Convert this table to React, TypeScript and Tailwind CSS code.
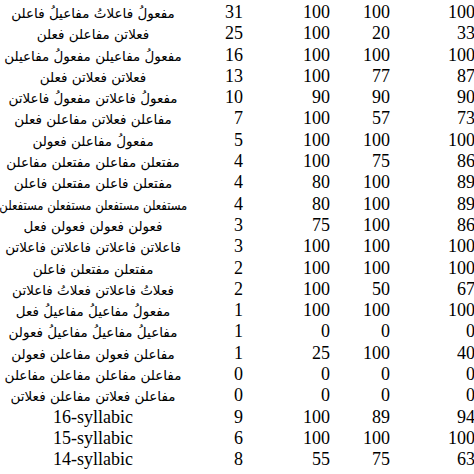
import React from "react";

const rows: [string, string, string, string, string][] = [
  ["مفعولُ فاعلاتُ مفاعيلُ فاعلن", "31", "100", "100", "100"],
  ["فعلاتن مفاعلن فعلن", "25", "100", "20", "33"],
  ["مفعولُ مفاعيلن مفعولُ مفاعيلن", "16", "100", "100", "100"],
  ["فعلاتن فعلاتن فعلن", "13", "100", "77", "87"],
  ["مفعولُ فاعلاتن مفعولُ فاعلاتن", "10", "90", "90", "90"],
  ["مفاعلن فعلاتن مفاعلن فعلن", "7", "100", "57", "73"],
  ["مفعولُ مفاعلن فعولن", "5", "100", "100", "100"],
  ["مفتعلن مفاعلن مفتعلن مفاعلن", "4", "100", "75", "86"],
  ["مفتعلن فاعلن مفتعلن فاعلن", "4", "80", "100", "89"],
  ["مستفعلن مستفعلن مستفعلن مستفعلن", "4", "80", "100", "89"],
  ["فعولن فعولن فعولن فعل", "3", "75", "100", "86"],
  ["فاعلاتن فاعلاتن فاعلاتن فاعلاتن", "3", "100", "100", "100"],
  ["مفتعلن مفتعلن فاعلن", "2", "100", "100", "100"],
  ["فعلاتُ فاعلاتن فعلاتُ فاعلاتن", "2", "100", "50", "67"],
  ["مفعولُ مفاعيلُ مفاعيلُ فعل", "1", "100", "100", "100"],
  ["مفاعيلُ مفاعيلُ مفاعيلُ فعولن", "1", "0", "0", "0"],
  ["مفاعلن فعولن مفاعلن فعولن", "1", "25", "100", "40"],
  ["مفاعلن مفاعلن مفاعلن مفاعلن", "0", "0", "0", "0"],
  ["مفاعلن فعلاتن مفاعلن فعلاتن", "0", "0", "0", "0"],
  ["16-syllabic", "9", "100", "89", "94"],
  ["15-syllabic", "6", "100", "100", "100"],
  ["14-syllabic", "8", "55", "75", "63"],
];

export default function App() {
  return (
    <div className="w-[474px] h-[474px] overflow-hidden bg-white text-black">
      <div
        className="w-[480px] pt-[2px] text-[18px] leading-[21.3px]"
        style={{ fontFamily: '"Liberation Serif", "DejaVu Sans", serif' }}
      >
        {rows.map((r, i) => {
          const arabic = i < 19;
          const wide = i === 9;
          return (
            <div key={i} className="flex items-baseline h-[21.3px]">
              <div className="w-[186px] shrink-0 flex justify-center">
                <span
                  dir={arabic ? "rtl" : "ltr"}
                  className={
                    wide
                      ? "inline-block whitespace-nowrap text-[13.5px] font-['DejaVu_Sans',sans-serif] scale-x-[0.86]"
                      : arabic
                      ? "whitespace-nowrap text-[13.5px] font-['DejaVu_Sans',sans-serif]"
                      : "whitespace-nowrap"
                  }
                >
                  {r[0]}
                </span>
              </div>
              <div className="w-[57px] shrink-0 text-right">{r[1]}</div>
              <div className="w-[87px] shrink-0 text-right">{r[2]}</div>
              <div className="w-[60px] shrink-0 text-right">{r[3]}</div>
              <div className="w-[85px] shrink-0 text-right">{r[4]}</div>
            </div>
          );
        })}
      </div>
    </div>
  );
}
